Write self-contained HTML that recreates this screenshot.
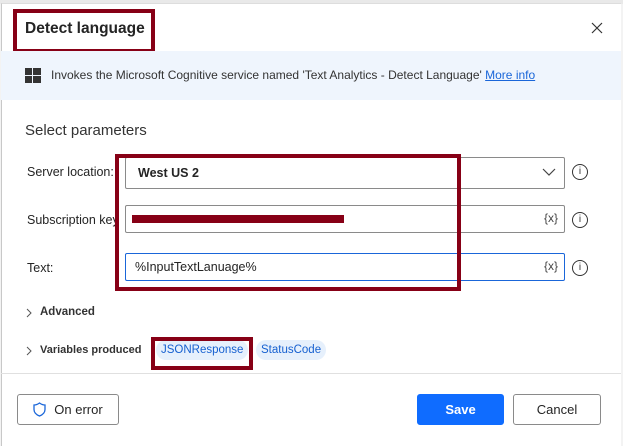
<!DOCTYPE html>
<html><head><style>
*{box-sizing:border-box;margin:0;padding:0}
body{width:623px;height:446px;background:#f3f3f3;position:relative;overflow:hidden;font-family:"Liberation Sans",sans-serif;color:#242424;font-size:12.5px}
.a{position:absolute}
.dlg{left:1px;top:3px;width:620px;height:443px;background:#fff;border-left:1px solid #c8c8c8;border-top:1px solid #ddd}
.red{border:4px solid #870016}
.inp{background:#fff;border:1px solid #8a8a8a;border-radius:2px}
.info{width:16px;height:16px;border:1.3px solid #333;border-radius:50%;font-size:10px;text-align:center;line-height:14px;color:#333}
.btn{border:1px solid #8a8a8a;border-radius:3px;background:#fff;font-size:13px;display:flex;align-items:center;justify-content:center}
.pill{background:#e6f0fc;color:#1660d0;border-radius:10px;font-size:12px;padding:4px 5px}
</style></head><body>
<div class="a" style="left:0;top:0;width:623px;height:4px;background:#e9e9e9"></div>
<div class="a dlg"></div>
<div class="a red" style="left:13px;top:9px;width:142px;height:44px"></div>
<div class="a" style="left:25px;top:20px;font-size:15.5px;font-weight:bold;color:#242424">Detect language</div>
<svg class="a" style="left:590px;top:21px" width="14" height="14" viewBox="0 0 14 14"><path d="M2 2L12 12M12 2L2 12" stroke="#333" stroke-width="1.2"/></svg>
<div class="a" style="left:1px;top:51px;width:620px;height:49px;background:#eff5fd"></div>
<div class="a" style="left:25px;top:68px;width:7px;height:7px;background:#333"></div>
<div class="a" style="left:33px;top:68px;width:8px;height:7px;background:#333"></div>
<div class="a" style="left:25px;top:76px;width:7px;height:7px;background:#333"></div>
<div class="a" style="left:33px;top:76px;width:8px;height:7px;background:#333"></div>
<div class="a" style="left:51px;top:68px;font-size:12px;color:#333">Invokes the Microsoft Cognitive service named 'Text Analytics - Detect Language' <span style="color:#1a66d9;text-decoration:underline">More info</span></div>
<div class="a" style="left:25px;top:122px;font-size:15px;color:#333">Select parameters</div>
<div class="a" style="left:27px;top:165px">Server location:</div>
<div class="a" style="left:27px;top:213px">Subscription key</div>
<div class="a" style="left:27px;top:261px">Text:</div>
<div class="a inp" style="left:125px;top:157px;width:440px;height:32px"></div>
<div class="a" style="left:138px;top:166px;font-weight:bold;font-size:12.5px">West US 2</div>
<svg class="a" style="left:542px;top:167px" width="14" height="10" viewBox="0 0 14 10"><path d="M1 2L7 8L13 2" fill="none" stroke="#444" stroke-width="1.2"/></svg>
<div class="a inp" style="left:125px;top:205px;width:440px;height:28px"></div>
<div class="a" style="left:132px;top:215px;width:212px;height:8px;background:#870016"></div>
<div class="a" style="left:544px;top:211px;font-size:12px;color:#444">{x}</div>
<div class="a inp" style="left:125px;top:253px;width:440px;height:28px;border-color:#1a66d9"></div>
<div class="a" style="left:135px;top:260px">%InputTextLanuage%</div>
<div class="a" style="left:544px;top:259px;font-size:12px;color:#444">{x}</div>
<div class="a info" style="left:572px;top:164px">i</div>
<div class="a info" style="left:572px;top:212px">i</div>
<div class="a info" style="left:572px;top:260px">i</div>
<div class="a red" style="left:115px;top:154px;width:346px;height:137px"></div>
<svg class="a" style="left:26px;top:308px" width="6" height="10"><path d="M1 1L5 5L1 9" fill="none" stroke="#555"/></svg>
<div class="a" style="left:40px;top:306px;font-weight:bold;font-size:11.5px;color:#333">Advanced</div>
<svg class="a" style="left:26px;top:346px" width="6" height="10"><path d="M1 1L5 5L1 9" fill="none" stroke="#555"/></svg>
<div class="a" style="left:40px;top:344px;font-weight:bold;font-size:11px;color:#333">Variables produced</div>
<div class="a pill" style="left:156px;top:340px;font-size:11.5px">JSONResponse</div>
<div class="a pill" style="left:256px;top:340px;font-size:11.5px">StatusCode</div>
<div class="a red" style="left:151px;top:337px;width:102px;height:33px"></div>
<div class="a" style="left:1px;top:373px;width:620px;height:1px;background:#e0e0e0"></div>
<div class="a btn" style="left:17px;top:394px;width:102px;height:31px"><svg width="13" height="15" viewBox="0 0 13 15" style="margin-right:8px"><path d="M6.5 1C4.5 2.5 3 3 1 3V7.5C1 10.5 3.5 12.8 6.5 14C9.5 12.8 12 10.5 12 7.5V3C10 3 8.5 2.5 6.5 1Z" fill="none" stroke="#1a66d9" stroke-width="1.3"/></svg>On error</div>
<div class="a btn" style="left:417px;top:394px;width:87px;height:31px;background:#0f6cff;border-color:#0f6cff;color:#fff;font-weight:bold">Save</div>
<div class="a btn" style="left:513px;top:394px;width:88px;height:31px">Cancel</div>
</body></html>
